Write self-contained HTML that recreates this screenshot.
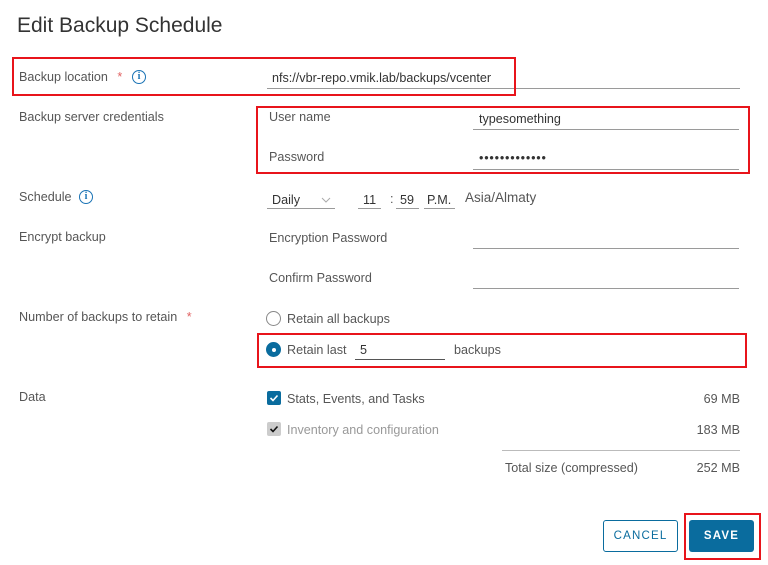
<!DOCTYPE html>
<html><head><meta charset="utf-8"><style>
body{margin:0;width:768px;height:565px;background:#fff;font-family:"Liberation Sans",sans-serif;color:#565656;font-size:12.6px;position:relative;overflow:hidden}
.a{position:absolute;white-space:nowrap;line-height:14px}
.u{position:absolute;height:1px;background:#9a9a9a}
.r{position:absolute;border:2px solid #e8141b;box-sizing:border-box}
.i{position:absolute;width:14px;height:14px;border:1.5px solid #1a73b5;border-radius:50%;box-sizing:border-box;color:#1a73b5;font-size:10px;font-weight:bold;text-align:center;line-height:12px;font-family:"Liberation Serif",serif}
.st{color:#e06060}
.dk{color:#333}
</style></head><body>
<div class="a" style="left:17px;top:13px;font-size:21px;line-height:25px;color:#333">Edit Backup Schedule</div>

<div class="a" style="left:19px;top:70px">Backup location <span class="st" style="margin-left:6px">*</span></div>
<div class="i" style="left:132px;top:70px">i</div>
<div class="a dk" style="left:272px;top:71px">nfs://vbr-repo.vmik.lab/backups/vcenter</div>
<div class="u" style="left:267px;top:88px;width:473px"></div>
<div class="r" style="left:12px;top:57px;width:504px;height:39px"></div>

<div class="a" style="left:19px;top:110px">Backup server credentials</div>
<div class="a" style="left:269px;top:110px">User name</div>
<div class="a dk" style="left:479px;top:112px">typesomething</div>
<div class="u" style="left:473px;top:129px;width:266px"></div>
<div class="a" style="left:269px;top:150px">Password</div>
<div class="a dk" style="left:479px;top:151px;letter-spacing:0.8px">•••••••••••••</div>
<div class="u" style="left:473px;top:169px;width:266px"></div>
<div class="r" style="left:256px;top:106px;width:494px;height:68px"></div>

<div class="a" style="left:19px;top:190px">Schedule</div>
<div class="i" style="left:79px;top:190px">i</div>
<div class="a dk" style="left:272px;top:193px">Daily</div>
<svg style="position:absolute;left:321px;top:197px" width="10" height="6"><path d="M1 1L5 5L9 1" fill="none" stroke="#aaa" stroke-width="1"/></svg>
<div class="u" style="left:267px;top:208px;width:68px"></div>
<div class="a dk" style="left:363px;top:193px">11</div>
<div class="u" style="left:358px;top:208px;width:23px"></div>
<div class="a" style="left:390px;top:192px">:</div>
<div class="a dk" style="left:400px;top:193px">59</div>
<div class="u" style="left:396px;top:208px;width:23px"></div>
<div class="a dk" style="left:427px;top:193px">P.M.</div>
<div class="u" style="left:424px;top:208px;width:31px"></div>
<div class="a" style="left:465px;top:191px;font-size:13.5px">Asia/Almaty</div>

<div class="a" style="left:19px;top:230px">Encrypt backup</div>
<div class="a" style="left:269px;top:231px">Encryption Password</div>
<div class="u" style="left:473px;top:248px;width:266px"></div>
<div class="a" style="left:269px;top:271px">Confirm Password</div>
<div class="u" style="left:473px;top:288px;width:266px"></div>

<div class="a" style="left:19px;top:310px">Number of backups to retain <span class="st" style="margin-left:6px">*</span></div>
<div style="position:absolute;left:266px;top:311px;width:15px;height:15px;border:1px solid #888;border-radius:50%;box-sizing:border-box"></div>
<div class="a" style="left:287px;top:312px">Retain all backups</div>
<div style="position:absolute;left:266px;top:342px;width:15px;height:15px;background:#0a6c9e;border-radius:50%"><div style="position:absolute;left:5.5px;top:5.5px;width:4px;height:4px;background:#fff;border-radius:50%"></div></div>
<div class="a" style="left:287px;top:343px">Retain last</div>
<div class="a dk" style="left:360px;top:343px">5</div>
<div class="u" style="left:355px;top:359px;width:90px;background:#555"></div>
<div class="a" style="left:454px;top:343px">backups</div>
<div class="r" style="left:257px;top:333px;width:490px;height:35px"></div>

<div class="a" style="left:19px;top:390px">Data</div>
<div style="position:absolute;left:267px;top:391px;width:14px;height:14px;background:#0a6c9e;border-radius:2px"><svg width="14" height="14" style="position:absolute"><path d="M3.5 7L6 9.5L10.5 4.5" fill="none" stroke="#fff" stroke-width="1.6"/></svg></div>
<div class="a" style="left:287px;top:392px">Stats, Events, and Tasks</div>
<div class="a" style="right:28px;top:392px">69 MB</div>
<div style="position:absolute;left:267px;top:422px;width:14px;height:14px;background:#ccc;border-radius:2px"><svg width="14" height="14" style="position:absolute"><path d="M3.5 7L6 9.5L10.5 4.5" fill="none" stroke="#111" stroke-width="1.6"/></svg></div>
<div class="a" style="left:287px;top:423px;color:#999">Inventory and configuration</div>
<div class="a" style="right:28px;top:423px">183 MB</div>
<div class="u" style="left:502px;top:450px;width:238px;background:#bbb"></div>
<div class="a" style="left:505px;top:461px">Total size (compressed)</div>
<div class="a" style="right:28px;top:461px">252 MB</div>

<div style="position:absolute;left:603px;top:520px;width:75px;height:32px;border:1px solid #0a6c9e;border-radius:3px;box-sizing:border-box;color:#0a6c9e;font-size:11.5px;letter-spacing:1.2px;text-align:center;line-height:30px">CANCEL</div>
<div style="position:absolute;left:689px;top:520px;width:65px;height:32px;background:#0a6c9e;border-radius:3px;color:#fff;font-size:11.5px;font-weight:bold;letter-spacing:1.2px;text-align:center;line-height:32px">SAVE</div>
<div class="r" style="left:684px;top:513px;width:77px;height:47px"></div>
</body></html>
